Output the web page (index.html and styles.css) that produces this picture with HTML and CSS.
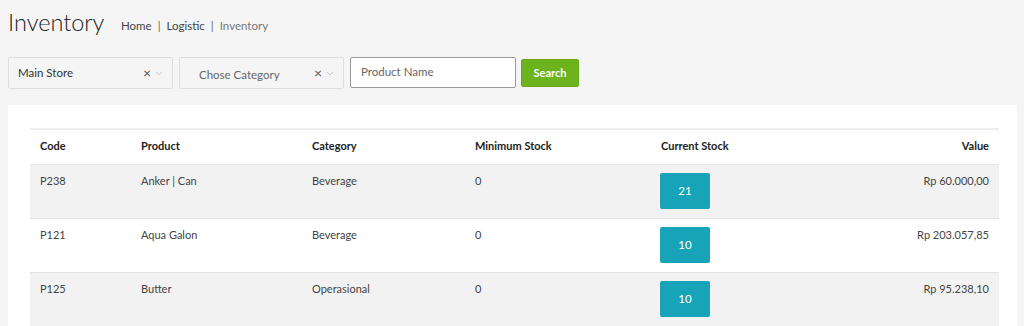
FILE: index.html
```html
<!DOCTYPE html>
<html>
<head>
<meta charset="utf-8">
<link rel="stylesheet" href="styles.css">
</head>
<body>
<div class="page">
  <div class="head">
    <h1 class="title">Inventory</h1>
    <div class="crumbs"><span class="crumb">Home</span><span class="sep">|</span><span class="crumb">Logistic</span><span class="sep">|</span><span class="crumb current">Inventory</span></div>
  </div>
  <div class="filters">
    <div class="select">
      <span class="sel-text">Main Store</span>
      <span class="sel-icons"><span class="clear">×</span><svg class="caret" width="8" height="5" viewBox="0 0 8 5"><path d="M1 1l3 3 3-3" fill="none" stroke="#c8c8c8" stroke-width="1"/></svg></span>
    </div>
    <div class="select">
      <span class="sel-text placeholder">Chose Category</span>
      <span class="sel-icons"><span class="clear">×</span><svg class="caret" width="8" height="5" viewBox="0 0 8 5"><path d="M1 1l3 3 3-3" fill="none" stroke="#c8c8c8" stroke-width="1"/></svg></span>
    </div>
    <div class="input">Product Name</div>
    <button class="btn-search">Search</button>
  </div>
  <div class="card">
    <table class="grid">
      <thead>
        <tr><th class="c-code">Code</th><th class="c-prod">Product</th><th class="c-cat">Category</th><th class="c-min">Minimum Stock</th><th class="c-cur">Current Stock</th><th class="c-val">Value</th></tr>
      </thead>
      <tbody>
        <tr class="odd"><td>P238</td><td>Anker | Can</td><td>Beverage</td><td>0</td><td><span class="badge">21</span></td><td class="c-val">Rp 60.000,00</td></tr>
        <tr><td>P121</td><td>Aqua Galon</td><td>Beverage</td><td>0</td><td><span class="badge">10</span></td><td class="c-val">Rp 203.057,85</td></tr>
        <tr class="odd"><td>P125</td><td>Butter</td><td>Operasional</td><td>0</td><td><span class="badge">10</span></td><td class="c-val">Rp 95.238,10</td></tr>
      </tbody>
    </table>
  </div>
</div>
</body>
</html>
```
FILE: styles.css
```css
html, body {
  margin: 0;
  padding: 0;
  background: #f5f5f5;
  font-family: Lato, "Open Sans", sans-serif;
  color: #333;
  overflow: hidden;
}
.page {
  padding: 0 7px 0 8px;
}
.head {
  display: flex;
  align-items: center;
  height: 44px;
}
.title {
  margin: 0;
  font-weight: 300;
  font-size: 23.5px;
  line-height: 44px;
  color: #1c1c1c;
  width: 113px;
}
.crumbs {
  font-size: 11.5px;
  color: #444;
  display: flex;
  gap: 6px;
  margin-top: 6px;
}
.crumb.current { color: #777; }
.sep { color: #666; }
.filters {
  display: flex;
  align-items: flex-start;
  gap: 6px;
  margin-top: 13px;
}
.select {
  box-sizing: border-box;
  width: 165px;
  height: 32px;
  background: #f5f5f5;
  border: 1px solid #dedede;
  border-radius: 2px;
  display: flex;
  align-items: center;
  justify-content: space-between;
  padding: 0 9px 0 9px;
  font-size: 11.5px;
  color: #333;
}
.sel-text { padding-bottom: 1px; }
.sel-text.placeholder { color: #666; padding-left: 10px; padding-top: 3px; padding-bottom: 0; }
.sel-icons {
  display: flex;
  align-items: center;
  gap: 4px;
}
.clear {
  font-size: 14px;
  color: #555;
  line-height: 1;
}
.input {
  box-sizing: border-box;
  width: 166px;
  height: 31px;
  border: 1px solid #999;
  border-radius: 2px;
  background: #fff;
  padding: 7px 10px 0;
  font-size: 11.5px;
  color: #666;
}
.btn-search {
  margin-top: 2px;
  margin-left: -1px;
  width: 58px;
  height: 28px;
  border: 1px solid #68a91a;
  border-radius: 2px;
  background: #6db31e;
  color: #fff;
  font-family: Lato, "Open Sans", sans-serif;
  font-size: 11px;
  font-weight: 700;
  padding: 0 0 2px;
}
.card {
  margin-top: 16px;
  background: #fff;
  padding: 23px 18px 0 22px;
  height: 221px;
  overflow: hidden;
}
.grid {
  width: 100%;
  border-collapse: collapse;
  border-top: 2px solid #eeeeee;
  font-size: 11px;
}
.grid th {
  text-align: left;
  font-weight: 700;
  color: #222;
  height: 35px;
  box-sizing: border-box;
  padding: 0 10px 2px;
  border-bottom: 1px solid #e6e6e6;
}
.grid td {
  vertical-align: top;
  height: 54px;
  box-sizing: border-box;
  padding: 9px 10px 0;
  color: #444;
  border-top: 1px solid #e2e2e2;
}
.grid tr.odd td { background: #f2f2f2; }
.grid .c-val { text-align: right; }
.c-code { width: 101px; }
.c-prod { width: 171px; }
.c-cat { width: 163px; }
.c-min { width: 186px; }
.c-cur { width: 160px; }
.grid td:nth-child(5) { padding-left: 9px; padding-top: 8px; }
.badge {
  display: flex;
  align-items: center;
  justify-content: center;
  width: 50px;
  height: 36px;
  background: #17a3b8;
  border-radius: 2px;
  color: #fff;
  font-size: 11.5px;
  font-weight: 400;
}
```
